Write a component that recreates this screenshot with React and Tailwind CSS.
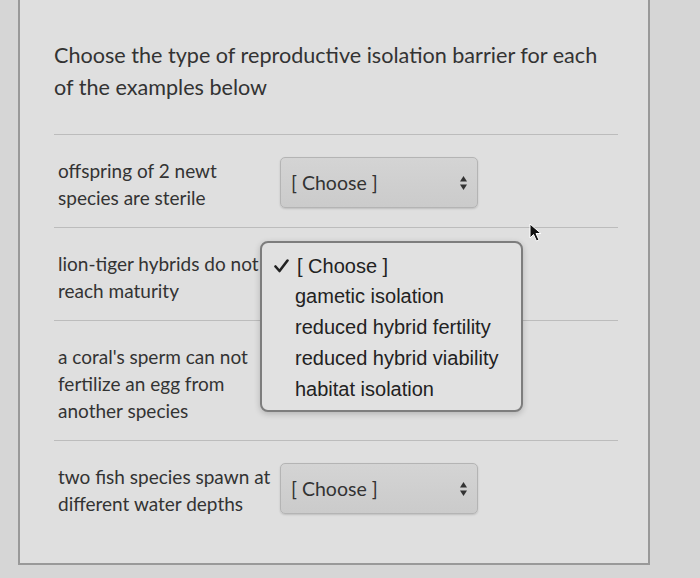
import React from "react";

const rows = [
  { lines: ["offspring of 2 newt", "species are sterile"], hidden: false },
  { lines: ["lion-tiger hybrids do not", "reach maturity"], hidden: true },
  { lines: ["a coral's sperm can not", "fertilize an egg from", "another species"], hidden: true },
  { lines: ["two fish species spawn at", "different water depths"], hidden: false },
];

const options = ["gametic isolation", "reduced hybrid fertility", "reduced hybrid viability", "habitat isolation"];

function SelectBox({ hidden }) {
  return (
    <div className={`${hidden ? "invisible" : ""} w-[198px] h-[51px] rounded-[5px] border border-[#b4b4b4] bg-gradient-to-b from-[#d4d4d4] to-[#cbcbcb] shadow-[0_1px_2px_rgba(0,0,0,0.15)] flex items-center justify-between pl-[10px] pr-[9px]`}>
      <span className="text-[19.5px] text-[#333]">[ Choose ]</span>
      <svg width="9" height="16" viewBox="0 0 9 16">
        <path d="M4.5 1 L8 6.5 H1 Z" fill="#333" />
        <path d="M4.5 15 L8 9.5 H1 Z" fill="#333" />
      </svg>
    </div>
  );
}

export default function App() {
  return (
    <div className="relative w-[700px] h-[578px] overflow-hidden bg-[#d6d6d6] font-['Lato','Open_Sans',sans-serif]">
      {/* question panel */}
      <div className="ml-[18px] w-[632px] h-[565px] bg-[#dfdfdf] border-l-2 border-r-2 border-b-2 border-[#999] pl-[34px] pr-[30px]">
        <h1 className="pt-[39px] text-[21.6px] leading-[32px] text-[#333] font-normal">
          Choose the type of reproductive isolation barrier for each
          <br />
          of the examples below
        </h1>
        <div className="mt-[31px]">
          {rows.map((row, i) => (
            <div key={i} className="border-t border-[#bcbcbc] pt-[19px] pb-[16px] pl-[4px] flex items-center">
              <div className="w-[222px] mt-[3px] text-[19px] leading-[27px] text-[#333]">
                {row.lines.map((l, j) => (
                  <div key={j}>{l}</div>
                ))}
              </div>
              <SelectBox hidden={row.hidden} />
            </div>
          ))}
        </div>
      </div>

      {/* open dropdown menu */}
      <div className="absolute left-[260px] top-[241px] w-[263px] h-[171px] rounded-[8px] border-2 border-[#7d7d7d] bg-[#e1e1e1] shadow-[0_2px_6px_rgba(0,0,0,0.2)] pt-[9px] font-['Liberation_Sans','Helvetica',sans-serif] text-[20px] text-[#222]">
        <div className="flex items-center h-[28px]">
          <span className="w-[35px] pl-[12px] flex items-center">
            <svg width="15" height="14" viewBox="0 0 15 14">
              <path d="M1.5 7.5 L5.5 12 L13.5 1.5" fill="none" stroke="#222" strokeWidth="2.6" strokeLinecap="round" strokeLinejoin="round" />
            </svg>
          </span>
          <span>[ Choose ]</span>
        </div>
        {options.map((o) => (
          <div key={o} className="flex items-center h-[31px] pl-[33px]">
            {o}
          </div>
        ))}
      </div>

      {/* mouse cursor */}
      <svg className="absolute left-[529px] top-[223px]" width="16" height="20" viewBox="0 0 16 20">
        <path d="M1 1 L1 15 L4.5 11.5 L7.5 18 L10 17 L7 10.5 L12 10.5 Z" fill="#111" stroke="#fff" strokeWidth="1" />
      </svg>
    </div>
  );
}
